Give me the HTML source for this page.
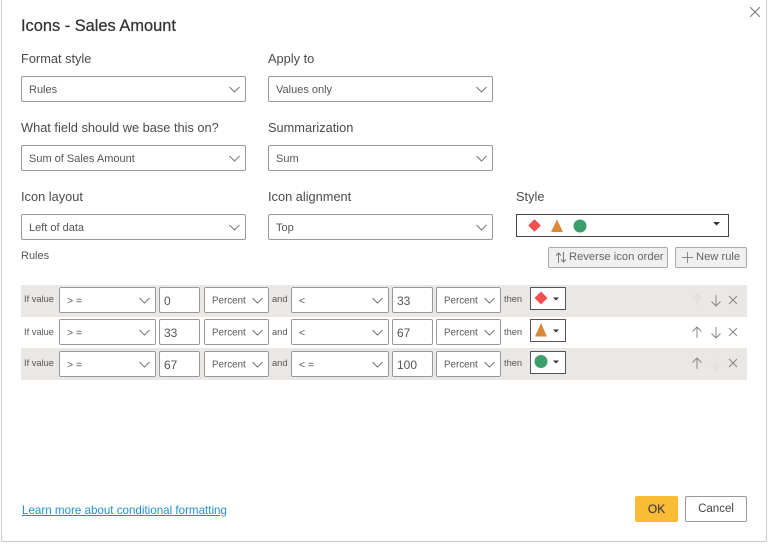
<!DOCTYPE html>
<html><head><meta charset="utf-8"><style>
html,body{margin:0;padding:0;background:#fff}
body{width:768px;height:547px;position:relative;overflow:hidden;font-family:"Liberation Sans",sans-serif;color:#444;filter:blur(.35px)}
.a{position:absolute;white-space:nowrap}
.l{font-size:12.8px;line-height:16px;color:#4a4a4a}
.s{position:absolute;box-sizing:border-box;background:#fff;border:1px solid #999;border-radius:2px;font-size:10.5px;color:#555;white-space:nowrap}
.s span{position:absolute;left:7px;top:calc(50% + 1px);transform:translateY(-50%)}
.s.n span{left:4px}
.s svg{position:absolute;right:5px;top:50%;margin-top:-5px}
.big{font-size:11px}
.n{font-size:12px}
.p{font-size:9.8px}
.r{position:absolute;left:21px;width:726px;height:32px}
.t{position:absolute;font-size:9.3px;line-height:12px;color:#555}
.i{position:absolute;left:509px;width:36px;height:23px;box-sizing:border-box;border:1px solid #555;background:#fff}
.b{position:absolute;box-sizing:border-box;background:#f0f0f0;border:1px solid #aaa;border-radius:2px;font-size:11.2px;color:#666;line-height:19px;white-space:nowrap}
</style></head><body>
<div class="a" style="left:1px;top:-2px;width:766px;height:544px;box-sizing:border-box;border:1px solid #ccc;border-width:0 1px 1px 1px"></div>
<div class="a" style="left:21px;top:16px;font-size:16.4px;line-height:20px;font-weight:400;color:#333;-webkit-text-stroke:.25px #333">Icons - Sales Amount</div>
<svg class="a" style="left:750px;top:7px" width="10" height="10"><path d="M0 0L10 10M10 0L0 10" stroke="#777" fill="none"/></svg>

<div class="a l" style="left:21px;top:51px">Format style</div>
<div class="a l" style="left:268px;top:51px">Apply to</div>
<div class="s big" style="left:21px;top:76px;width:225px;height:26px"><span>Rules</span><svg width="11" height="10"><path d="M.5 3L5.500 8L10.500 3" stroke="#777" fill="none"/></svg></div>
<div class="s big" style="left:268px;top:76px;width:225px;height:26px"><span>Values only</span><svg width="11" height="10"><path d="M.5 3L5.500 8L10.500 3" stroke="#777" fill="none"/></svg></div>

<div class="a l" style="left:21px;top:120px">What field should we base this on?</div>
<div class="a l" style="left:268px;top:120px">Summarization</div>
<div class="s big" style="left:21px;top:145px;width:225px;height:26px"><span>Sum of Sales Amount</span><svg width="11" height="10"><path d="M.5 3L5.500 8L10.500 3" stroke="#777" fill="none"/></svg></div>
<div class="s big" style="left:268px;top:145px;width:225px;height:26px"><span>Sum</span><svg width="11" height="10"><path d="M.5 3L5.500 8L10.500 3" stroke="#777" fill="none"/></svg></div>

<div class="a l" style="left:21px;top:189px">Icon layout</div>
<div class="a l" style="left:268px;top:189px">Icon alignment</div>
<div class="a l" style="left:516px;top:189px">Style</div>
<div class="s big" style="left:21px;top:214px;width:225px;height:26px"><span>Left of data</span><svg width="11" height="10"><path d="M.5 3L5.500 8L10.500 3" stroke="#777" fill="none"/></svg></div>
<div class="s big" style="left:268px;top:214px;width:225px;height:26px"><span>Top</span><svg width="11" height="10"><path d="M.5 3L5.500 8L10.500 3" stroke="#777" fill="none"/></svg></div>
<svg class="a" style="left:516px;top:214px" width="213" height="23">
<rect x=".5" y=".5" width="212" height="22" fill="#fff" stroke="#444"/>
<path d="M18.500 5.500L24.500 11.500L18.500 17.500L12.500 11.500Z" fill="#f25050" stroke="#e04545" stroke-width=".5"/>
<path d="M35 18L41 5.500L47 18Z" fill="#d9883a"/>
<circle cx="64" cy="12" r="6.500" fill="#3c9f6b"/>
<path d="M197 8h7l-3.500 3.500Z" fill="#333"/>
</svg>

<div class="a" style="left:21px;top:249px;font-size:11px;line-height:14px;color:#555">Rules</div>
<div class="b" style="left:548px;top:247px;width:120px;height:21px;padding-left:20px;">Reverse icon order<svg class="a" style="left:6px;top:3px" width="12" height="13"><path d="M3.500 12V2M1 4.500L3.500 2L6 4.500M8.500 1V11M6 8.500L8.500 11L11 8.500" stroke="#777" fill="none"/></svg></div>
<div class="b" style="left:675px;top:247px;width:72px;height:21px;padding-left:20px">New rule<svg class="a" style="left:6px;top:4px" width="11" height="11"><path d="M5.500 0V11M0 5.500H11" stroke="#888" fill="none"/></svg></div>

<div class="r" style="top:285px;background:#eae7e4">
<div class="t" style="left:3px;top:8px">If value</div>
<div class="s" style="left:38px;top:2px;width:97px;height:26px"><span>&gt; =</span><svg width="11" height="10"><path d="M.5 3L5.500 8L10.500 3" stroke="#777" fill="none"/></svg></div>
<div class="s n" style="left:138px;top:2px;width:41px;height:26px"><span>0</span></div>
<div class="s p" style="left:183px;top:2px;width:65px;height:26px"><span>Percent</span><svg width="11" height="10"><path d="M.5 3L5.500 8L10.500 3" stroke="#777" fill="none"/></svg></div>
<div class="t" style="left:251px;top:8px">and</div>
<div class="s" style="left:270px;top:2px;width:98px;height:26px"><span>&lt;</span><svg width="11" height="10"><path d="M.5 3L5.500 8L10.500 3" stroke="#777" fill="none"/></svg></div>
<div class="s n" style="left:371px;top:2px;width:41px;height:26px"><span>33</span></div>
<div class="s p" style="left:415px;top:2px;width:65px;height:26px"><span>Percent</span><svg width="11" height="10"><path d="M.5 3L5.500 8L10.500 3" stroke="#777" fill="none"/></svg></div>
<div class="t" style="left:483px;top:8px">then</div>
<div class="i" style="top:2px"></div>
<svg class="a" style="left:509px;top:2px" width="36" height="23"><path d="M11 4.500L17.500 11L11 17.500L4.500 11Z" fill="#f25050"/><path d="M23 10.500h6l-3 3Z" fill="#333"/></svg>
<svg class="a" style="left:670px;top:7px" width="50" height="16"><path d="M6 14V3M1.500 7.500L6 3L10.500 7.500" stroke="#ddd" fill="none"/><path d="M25 3V14M20.500 9.500L25 14L29.500 9.500" stroke="#888" fill="none"/><path d="M38 4L46 12M46 4L38 12" stroke="#888" fill="none"/></svg>
</div>

<div class="r" style="top:317px">
<div class="t" style="left:3px;top:9px">If value</div>
<div class="s" style="left:38px;top:2px;width:97px;height:26px"><span>&gt; =</span><svg width="11" height="10"><path d="M.5 3L5.500 8L10.500 3" stroke="#777" fill="none"/></svg></div>
<div class="s n" style="left:138px;top:2px;width:41px;height:26px"><span>33</span></div>
<div class="s p" style="left:183px;top:2px;width:65px;height:26px"><span>Percent</span><svg width="11" height="10"><path d="M.5 3L5.500 8L10.500 3" stroke="#777" fill="none"/></svg></div>
<div class="t" style="left:251px;top:9px">and</div>
<div class="s" style="left:270px;top:2px;width:98px;height:26px"><span>&lt;</span><svg width="11" height="10"><path d="M.5 3L5.500 8L10.500 3" stroke="#777" fill="none"/></svg></div>
<div class="s n" style="left:371px;top:2px;width:41px;height:26px"><span>67</span></div>
<div class="s p" style="left:415px;top:2px;width:65px;height:26px"><span>Percent</span><svg width="11" height="10"><path d="M.5 3L5.500 8L10.500 3" stroke="#777" fill="none"/></svg></div>
<div class="t" style="left:483px;top:9px">then</div>
<div class="i" style="top:2px"></div>
<svg class="a" style="left:509px;top:2px" width="36" height="23"><path d="M5 17.500L11 4L17 17.500Z" fill="#d9883a"/><path d="M23 10.500h6l-3 3Z" fill="#333"/></svg>
<svg class="a" style="left:670px;top:6.500px" width="50" height="16"><path d="M6 14V3M1.500 7.500L6 3L10.500 7.500" stroke="#888" fill="none"/><path d="M25 3V14M20.500 9.500L25 14L29.500 9.500" stroke="#888" fill="none"/><path d="M38 4L46 12M46 4L38 12" stroke="#888" fill="none"/></svg>
</div>

<div class="r" style="top:348px;background:#eae7e4">
<div class="t" style="left:3px;top:9px">If value</div>
<div class="s" style="left:38px;top:3px;width:97px;height:26px"><span>&gt; =</span><svg width="11" height="10"><path d="M.5 3L5.500 8L10.500 3" stroke="#777" fill="none"/></svg></div>
<div class="s n" style="left:138px;top:3px;width:41px;height:26px"><span>67</span></div>
<div class="s p" style="left:183px;top:3px;width:65px;height:26px"><span>Percent</span><svg width="11" height="10"><path d="M.5 3L5.500 8L10.500 3" stroke="#777" fill="none"/></svg></div>
<div class="t" style="left:251px;top:9px">and</div>
<div class="s" style="left:270px;top:3px;width:98px;height:26px"><span>&lt; =</span><svg width="11" height="10"><path d="M.5 3L5.500 8L10.500 3" stroke="#777" fill="none"/></svg></div>
<div class="s n" style="left:371px;top:3px;width:41px;height:26px"><span>100</span></div>
<div class="s p" style="left:415px;top:3px;width:65px;height:26px"><span>Percent</span><svg width="11" height="10"><path d="M.5 3L5.500 8L10.500 3" stroke="#777" fill="none"/></svg></div>
<div class="t" style="left:483px;top:9px">then</div>
<div class="i" style="top:3px"></div>
<svg class="a" style="left:509px;top:3px" width="36" height="23"><circle cx="11" cy="10.500" r="6.500" fill="#3c9f6b"/><path d="M23 9.500h6l-3 3Z" fill="#333"/></svg>
<svg class="a" style="left:670px;top:7px" width="50" height="16"><path d="M6 14V3M1.500 7.500L6 3L10.500 7.500" stroke="#888" fill="none"/><path d="M25 3V14M20.500 9.500L25 14L29.500 9.500" stroke="#ddd" fill="none"/><path d="M38 4L46 12M46 4L38 12" stroke="#888" fill="none"/></svg>
</div>

<div class="a" style="left:22px;top:503px;font-size:11.600px;line-height:15px;color:#1f8fd0;text-decoration:underline">Learn more about conditional formatting</div>
<div class="a" style="left:635px;top:496px;width:43px;height:26px;background:#fbbc35;border-radius:2px;text-align:center;font-size:12px;font-weight:400;line-height:26px;color:#444;-webkit-text-stroke:.2px #444">OK</div>
<div class="a" style="left:685px;top:496px;width:62px;height:26px;box-sizing:border-box;border:1px solid #999;border-radius:2px;background:#fff;text-align:center;font-size:11.500px;line-height:24px;color:#444">Cancel</div>
</body></html>
